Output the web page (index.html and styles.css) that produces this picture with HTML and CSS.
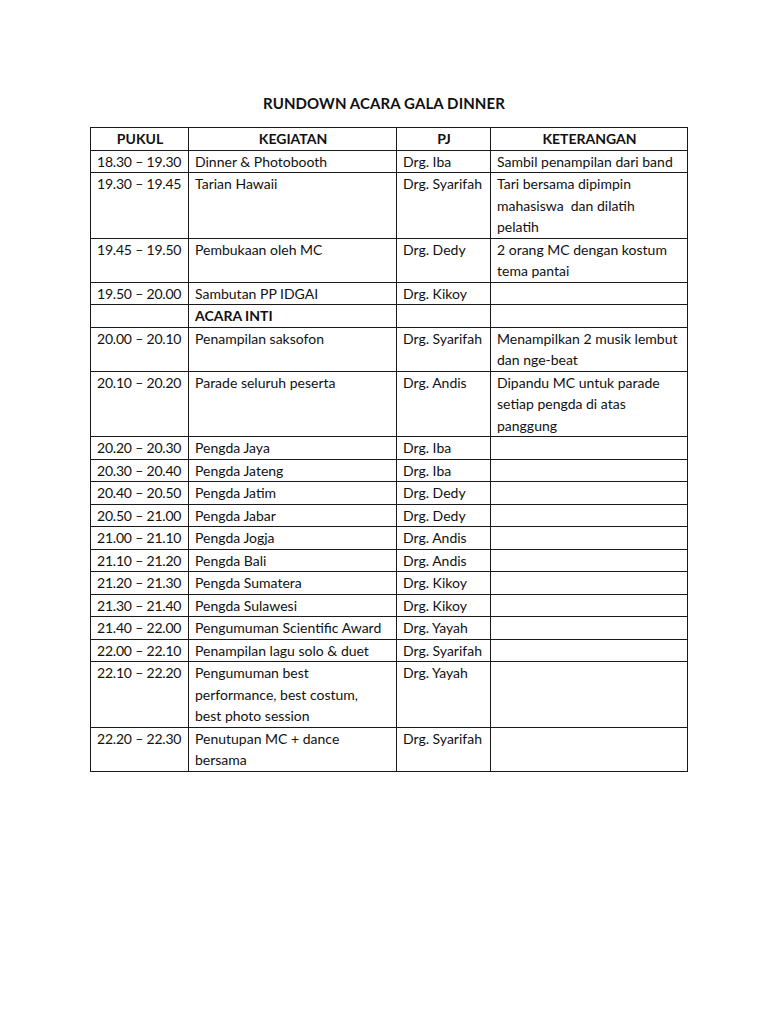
FILE: index.html
```html
<!DOCTYPE html>
<html lang="id">
<head>
<meta charset="utf-8">
<title>Rundown Acara Gala Dinner</title>
<link rel="stylesheet" href="styles.css">
</head>
<body>
<main class="page">
  <h1 class="title">RUNDOWN ACARA GALA DINNER</h1>
  <table class="rundown">
    <colgroup>
      <col class="c-time"><col class="c-act"><col class="c-pj"><col class="c-note">
    </colgroup>
    <thead>
      <tr><th>PUKUL</th><th>KEGIATAN</th><th>PJ</th><th>KETERANGAN</th></tr>
    </thead>
    <tbody>
      <tr><td class="time">18.30 – 19.30</td><td>Dinner &amp; Photobooth</td><td>Drg. Iba</td><td>Sambil penampilan dari band</td></tr>
      <tr><td class="time">19.30 – 19.45</td><td>Tarian Hawaii</td><td>Drg. Syarifah</td><td>Tari bersama dipimpin<br>mahasiswa&nbsp; dan dilatih<br>pelatih</td></tr>
      <tr><td class="time">19.45 – 19.50</td><td>Pembukaan oleh MC</td><td>Drg. Dedy</td><td>2 orang MC dengan kostum<br>tema pantai</td></tr>
      <tr><td class="time">19.50 – 20.00</td><td>Sambutan PP IDGAI</td><td>Drg. Kikoy</td><td></td></tr>
      <tr><td class="time"></td><td class="strong">ACARA INTI</td><td></td><td></td></tr>
      <tr><td class="time">20.00 – 20.10</td><td>Penampilan saksofon</td><td>Drg. Syarifah</td><td>Menampilkan 2 musik lembut<br>dan nge-beat</td></tr>
      <tr><td class="time">20.10 – 20.20</td><td>Parade seluruh peserta</td><td>Drg. Andis</td><td>Dipandu MC untuk parade<br>setiap pengda di atas<br>panggung</td></tr>
      <tr><td class="time">20.20 – 20.30</td><td>Pengda Jaya</td><td>Drg. Iba</td><td></td></tr>
      <tr><td class="time">20.30 – 20.40</td><td>Pengda Jateng</td><td>Drg. Iba</td><td></td></tr>
      <tr><td class="time">20.40 – 20.50</td><td>Pengda Jatim</td><td>Drg. Dedy</td><td></td></tr>
      <tr><td class="time">20.50 – 21.00</td><td>Pengda Jabar</td><td>Drg. Dedy</td><td></td></tr>
      <tr><td class="time">21.00 – 21.10</td><td>Pengda Jogja</td><td>Drg. Andis</td><td></td></tr>
      <tr><td class="time">21.10 – 21.20</td><td>Pengda Bali</td><td>Drg. Andis</td><td></td></tr>
      <tr><td class="time">21.20 – 21.30</td><td>Pengda Sumatera</td><td>Drg. Kikoy</td><td></td></tr>
      <tr><td class="time">21.30 – 21.40</td><td>Pengda Sulawesi</td><td>Drg. Kikoy</td><td></td></tr>
      <tr><td class="time">21.40 – 22.00</td><td>Pengumuman Scientific Award</td><td>Drg. Yayah</td><td></td></tr>
      <tr><td class="time">22.00 – 22.10</td><td>Penampilan lagu solo &amp; duet</td><td>Drg. Syarifah</td><td></td></tr>
      <tr><td class="time">22.10 – 22.20</td><td>Pengumuman best<br>performance, best costum,<br>best photo session</td><td>Drg. Yayah</td><td></td></tr>
      <tr><td class="time">22.20 – 22.30</td><td>Penutupan MC + dance<br>bersama</td><td>Drg. Syarifah</td><td></td></tr>
    </tbody>
  </table>
</main>
</body>
</html>
```

FILE: styles.css
```css
html, body {
  margin: 0;
  padding: 0;
  background: #ffffff;
}

body {
  font-family: "Lato", "Open Sans", "Liberation Sans", sans-serif;
  color: #111111;
}

.page {
  width: 768px;
  padding-top: 93px;
}

.title {
  margin: 0 0 13px 0;
  text-align: center;
  font-size: 15px;
  line-height: 21px;
  font-weight: 700;
  letter-spacing: 0.1px;
}

.rundown {
  width: 597px;
  margin-left: 90px;
  border-collapse: collapse;
  table-layout: fixed;
  font-size: 14px;
  line-height: 21.5px;
}

.c-time { width: 98px; }
.c-act  { width: 208px; }
.c-pj   { width: 94px; }
.c-note { width: 197px; }

.rundown th,
.rundown td {
  border: 1px solid #1a1a1a;
  padding: 0 5px 0 6px;
  vertical-align: top;
  text-align: left;
  white-space: nowrap;
  overflow: hidden;
}

.rundown th {
  font-weight: 700;
  text-align: center;
}

.rundown .time {
  letter-spacing: -0.2px;
}

.rundown .strong {
  font-weight: 700;
}
```
